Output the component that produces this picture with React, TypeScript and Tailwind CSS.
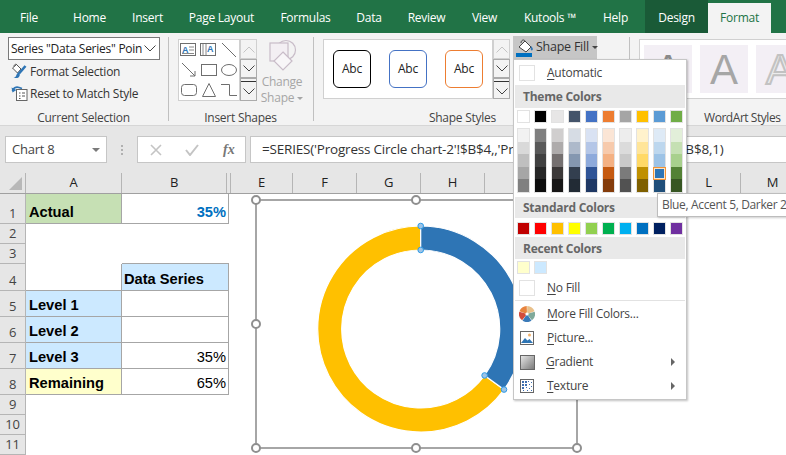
import React from "react";

const tabs: [string, string][] = [
  ["File", "w-[58px]"],
  ["Home", "w-[63px]"],
  ["Insert", "w-[53px]"],
  ["Page Layout", "w-[95px]"],
  ["Formulas", "w-[73px]"],
  ["Data", "w-[54px]"],
  ["Review", "w-[61px]"],
  ["View", "w-[55px]"],
  ["Kutools ™", "w-[76px]"],
  ["Help", "w-[57px] pr-[2px]"],
];

const themeTop = ["#ffffff", "#000000", "#e7e6e6", "#44546a", "#4472c4", "#ed7d31", "#a5a5a5", "#ffc000", "#5b9bd5", "#70ad47"];
const themeShades = [
  ["#f2f2f2", "#d9d9d9", "#bfbfbf", "#a6a6a6", "#808080"],
  ["#7f7f7f", "#595959", "#404040", "#262626", "#0d0d0d"],
  ["#d0cece", "#aeabab", "#757070", "#3b3838", "#171616"],
  ["#d6dce4", "#adb9ca", "#8497b0", "#333f4f", "#222b35"],
  ["#d9e2f3", "#b4c6e7", "#8eaadb", "#2f5496", "#1f3864"],
  ["#fbe5d5", "#f7caac", "#f4b183", "#c55a11", "#843c0b"],
  ["#ededed", "#dbdbdb", "#c9c9c9", "#7b7b7b", "#525252"],
  ["#fff2cc", "#ffe599", "#ffd966", "#bf9000", "#7f6000"],
  ["#deeaf6", "#bdd7ee", "#9dc3e6", "#2e75b5", "#1f4e79"],
  ["#e2efd9", "#c5e0b3", "#a8d08d", "#538135", "#375623"],
];
const standard = ["#c00000", "#ff0000", "#ffc000", "#ffff00", "#92d050", "#00b050", "#00b0f0", "#0070c0", "#002060", "#7030a0"];

function polar(cx: number, cy: number, r: number, deg: number): [number, number] {
  const a = (deg * Math.PI) / 180;
  return [cx + r * Math.sin(a), cy - r * Math.cos(a)];
}
function sector(cx: number, cy: number, ro: number, ri: number, a: number, b: number) {
  const [x1, y1] = polar(cx, cy, ro, a);
  const [x2, y2] = polar(cx, cy, ro, b);
  const [x3, y3] = polar(cx, cy, ri, b);
  const [x4, y4] = polar(cx, cy, ri, a);
  const large = b - a > 180 ? 1 : 0;
  return `M${x1} ${y1}A${ro} ${ro} 0 ${large} 1 ${x2} ${y2}L${x3} ${y3}A${ri} ${ri} 0 ${large} 0 ${x4} ${y4}Z`;
}

function Chevron({ up = false, color = "#444" }: { up?: boolean; color?: string }) {
  return (
    <svg width="12" height="7" viewBox="0 0 12 7" fill="none">
      <path d={up ? "M0.5 6.5L6 1l5.5 5.5" : "M0.5 0.5L6 6l5.5-5.5"} stroke={color} />
    </svg>
  );
}

function Scroller() {
  return (
    <div className="flex flex-col w-[17px]">
      <div className="h-[20px] border border-[#d0d0d0] bg-[#f3f3f3] flex items-center justify-center">
        <Chevron up color="#c4c4c4" />
      </div>
      <div className="h-[19px] border border-[#ababab] bg-[#f3f3f3] flex items-center justify-center">
        <Chevron />
      </div>
      <div className="flex-1 border border-[#ababab] bg-[#f3f3f3] flex flex-col items-center">
        <div className="w-full h-px bg-[#333] mt-[2px] mb-[6px]" />
        <Chevron />
      </div>
    </div>
  );
}

function ShapeIcon({ i }: { i: number }) {
  const s = "#6e6e6e";
  const shapes = [
    <g key="0">
      <rect x="1.5" y="2.5" width="15" height="12" fill="#fff" stroke={s} />
      <text x="3" y="11.5" fontSize="9" fontWeight="700" fill="#2e75b5" fontFamily="Liberation Sans">A</text>
      <path d="M10 6h5M10 9h5M3 12.5h12" stroke="#888" />
    </g>,
    <g key="1">
      <rect x="1.5" y="2.5" width="15" height="12" fill="#fff" stroke={s} />
      <path d="M4 3v11M7 3v11" stroke="#888" />
      <text x="8" y="11" fontSize="9" fontWeight="700" fill="#2e75b5" fontFamily="Liberation Sans">A</text>
    </g>,
    <path key="2" d="M3 2l14 14" stroke={s} fill="none" />,
    <path key="3" d="M3 2l13 13M16 10v5h-5" stroke={s} fill="none" />,
    <rect key="4" x="2.5" y="3.5" width="15" height="11" stroke={s} fill="none" />,
    <ellipse key="5" cx="10" cy="9" rx="7.5" ry="5.5" stroke={s} fill="none" />,
    <rect key="6" x="2.5" y="3.5" width="15" height="11" rx="3" stroke={s} fill="none" />,
    <path key="7" d="M10 2.5l6.5 13h-13z" stroke={s} fill="none" />,
    <path key="8" d="M2 3.5h8.5v11H18" stroke={s} fill="none" />,
  ];
  return (
    <svg width="20" height="18" viewBox="0 0 20 18">
      {shapes[i]}
    </svg>
  );
}

function AbcCard({ border }: { border: string }) {
  return (
    <div className={`w-[38px] h-[38px] rounded-[6px] border bg-white flex items-center justify-center pb-px text-[12px] text-[#222] ${border}`}>
      Abc
    </div>
  );
}

function Ribbon() {
  return (
    <div className="flex h-[93px] shrink-0 bg-[#f3f3f3] pt-[4px] border-b border-[#d6d6d6] text-[#444]">
      {/* Current Selection */}
      <div className="w-[169px] h-[84px] border-r border-[#c0c0c0] flex flex-col shrink-0">
        <div className="shrink-0 ml-[8px] w-[152px] h-[23px] border border-[#7a7a7a] bg-white flex items-center pl-[2px] pr-[3px] justify-between text-[12px] text-[#222] whitespace-nowrap overflow-hidden">
          <span className="overflow-hidden">Series "Data Series" Poin</span>
          <span className="shrink-0 pl-[2px]">
            <Chevron />
          </span>
        </div>
        <div className="shrink-0 ml-[11px] h-[22px] pt-px flex items-center gap-[2px] text-[12px] text-[#333]">
          <svg width="17" height="17" viewBox="0 0 17 17" fill="none">
            <path d="M1.5 5L5.5 1.5 10 6l-3.5 4z" fill="#fff" stroke="#555" />
            <path d="M3 3.5c0-2 2-3 3-1.5" stroke="#555" />
            <path d="M14.5 3L8 10.5" stroke="#2e75b5" strokeWidth="2.6" />
            <path d="M7.5 9.5c-1.5.5-2 2-2.5 3.5-.5 1-1.5 1.5-2.5 1.5 2 1 5 1 6-1.5.5-1 .5-2.5-1-3.5z" fill="#2e75b5" />
          </svg>
          <span>Format Selection</span>
        </div>
        <div className="shrink-0 ml-[11px] h-[22px] pt-px flex items-center gap-[2px] text-[12px] text-[#333]">
          <svg width="17" height="17" viewBox="0 0 17 17" fill="none">
            <rect x="5.5" y="4.5" width="10.5" height="11" fill="#fff" stroke="#666" />
            <path d="M8 8h1.5M11 8h3M8 11h1.5M11 11h3M8 13.5h1.5" stroke="#555" />
            <path d="M1.5 6C2 3 5 1.5 8 2.5l3 1" stroke="#2e75b5" strokeWidth="1.8" />
            <path d="M0.5 2.5l1 5 4-2.5z" fill="#2e75b5" />
          </svg>
          <span>Reset to Match Style</span>
        </div>
        <div className="shrink-0 mt-[5px] text-center text-[12px] text-[#444] pr-[1px]">Current Selection</div>
      </div>

      {/* Insert Shapes */}
      <div className="w-[145px] h-[84px] border-r border-[#c0c0c0] flex flex-col shrink-0">
        <div className="shrink-0 flex h-[62px] mt-[2px] ml-[9px]">
          <div className="w-[62px] bg-white border border-[#d0d0d0] grid grid-cols-3 place-items-center">
            {[0, 1, 2, 3, 4, 5, 6, 7, 8].map((i) => (
              <ShapeIcon key={i} i={i} />
            ))}
          </div>
          <Scroller />
          <div className="w-[42px] ml-[4px] flex flex-col items-center text-[12px] text-[#a6a6a6] leading-[16px]">
            <svg width="30" height="32" viewBox="0 0 30 32" fill="none" className="mt-[0px] shrink-0">
              <circle cx="19" cy="11" r="9.5" fill="#f3f3f3" stroke="#c8bcc8" strokeWidth="1.2" />
              <rect x="3" y="4" width="18" height="18" fill="#f3eff3" stroke="#c8bcc8" strokeWidth="1.2" />
              <path d="M16 13l9 9-9 9-9-9z" fill="#f8f6f8" stroke="#c8bcc8" strokeWidth="1.2" />
            </svg>
            <span className="mt-[3px] shrink-0">Change</span>
            <span className="flex items-center gap-[3px] shrink-0">
              Shape
              <span className="w-0 h-0 border-x-[3px] border-x-transparent border-t-[3px] border-t-[#a6a6a6]" />
            </span>
          </div>
        </div>
        <div className="shrink-0 mt-[8px] text-center text-[12px] pr-[1px]">Insert Shapes</div>
      </div>

      {/* Shape Styles */}
      <div className="w-[316px] h-[84px] border-r border-[#c0c0c0] flex flex-col shrink-0">
        <div className="shrink-0 flex h-[62px] ml-[9px]">
          <div className="flex h-[60px] mt-[2px]">
            <div className="w-[170px] bg-white border border-[#d0d0d0] flex items-center gap-[18px] pl-[9px]">
              <AbcCard border="border-black" />
              <AbcCard border="border-[#4472c4]" />
              <AbcCard border="border-[#ed7d31]" />
            </div>
            <Scroller />
          </div>
          <div className="ml-[3px] -mt-[1px] w-[84px] h-[23px] bg-[#c6c6c6] flex items-center pl-[3px] text-[12.5px] text-[#333] whitespace-nowrap">
            <svg width="19" height="19" viewBox="0 0 19 19" fill="none" className="shrink-0">
              <path d="M3 9l6-6 6 6-5 5z" fill="#fff" stroke="#444" />
              <path d="M5 5c0-3 3-4 4-2" stroke="#444" />
              <path d="M15 8c2 2 2.5 4 1 4.500-1.500 0-1.500-2.500-1-4.500z" fill="#2e75b5" />
              <rect x="0" y="15" width="16" height="4" fill="#0070c0" />
            </svg>
            <span className="ml-[1px]">Shape Fill</span>
            <span className="ml-[3px] w-0 h-0 border-x-[3px] border-x-transparent border-t-[3px] border-t-[#444]" />
          </div>
        </div>
        <div className="shrink-0 mt-[10px] text-center text-[12px] pr-[18px]">Shape Styles</div>
      </div>

      {/* WordArt Styles */}
      <div className="flex-1 h-[84px] flex flex-col min-w-0">
        <div className="shrink-0 ml-[9px] mt-[2px] h-[60px] bg-white border border-[#d0d0d0] border-r-0 flex items-center gap-[8px] pl-[4px] overflow-hidden font-['Liberation_Sans',sans-serif]">
          <div className="shrink-0 w-[48px] h-[48px] bg-[#f3eff5] flex items-center justify-center text-[42px] text-[#8a8a8a]">A</div>
          <div className="shrink-0 w-[48px] h-[48px] bg-[#f3eff5] flex items-center justify-center text-[42px] text-[#a6a6a6]">A</div>
          <div className="shrink-0 w-[48px] h-[48px] bg-[#f3eff5] flex items-center justify-center text-[42px] text-[#ececec] [-webkit-text-stroke:2px_#c2c2c2]">A</div>
        </div>
        <div className="shrink-0 mt-[10px] pl-[74px] text-[12px] tracking-[-0.45px] whitespace-nowrap">WordArt Styles</div>
      </div>
    </div>
  );
}

function FormulaBar() {
  return (
    <div className="h-[47px] bg-[#e6e6e6] flex pt-[10px] pl-[5px] shrink-0">
      <div className="w-[102px] h-[27px] bg-white border border-[#c6c6c6] flex items-center justify-between pl-[6px] pr-[6px] text-[13px] text-[#444]">
        Chart 8
        <span className="w-0 h-0 border-x-[4px] border-x-transparent border-t-[4px] border-t-[#7a7a7a]" />
      </div>
      <div className="w-[30px] flex flex-col items-center justify-center gap-[2px] h-[27px]">
        <span className="w-[2px] h-[2px] bg-[#b0b0b0]" />
        <span className="w-[2px] h-[2px] bg-[#b0b0b0]" />
        <span className="w-[2px] h-[2px] bg-[#b0b0b0]" />
      </div>
      <div className="w-[109px] h-[27px] bg-white border border-[#c6c6c6] flex items-center">
        <svg width="12" height="12" viewBox="0 0 12 12" fill="none" className="ml-[12px]">
          <path d="M1 1l10 10M11 1L1 11" stroke="#c4c4c4" strokeWidth="1.6" />
        </svg>
        <svg width="14" height="12" viewBox="0 0 14 12" fill="none" className="ml-[23px]">
          <path d="M1 6l4 5 8-10" stroke="#c4c4c4" strokeWidth="2" />
        </svg>
        <span className="ml-[24px] font-['Liberation_Serif',serif] italic font-bold text-[14px] tracking-[0] text-[#777]">fx</span>
      </div>
      <div className="ml-[4px] flex-1 h-[27px] bg-white border border-[#c6c6c6] border-r-0 flex items-center pl-[11px] text-[13.5px] tracking-[-0.2px] text-[#333] whitespace-nowrap overflow-hidden">
        =SERIES('Progress Circle chart-2'!$B$4,,'Progress Circle chart-2'!$B$5:$B$8,1)
      </div>
    </div>
  );
}

const columns: [string, string][] = [
  ["A", "w-[96px]"],
  ["B", "w-[105px]"],
  ["", "w-[4px]"],
  ["E", "w-[62px]"],
  ["F", "w-[64px]"],
  ["G", "w-[64px]"],
  ["H", "w-[64px]"],
  ["I", "w-[64px]"],
  ["J", "w-[64px]"],
  ["K", "w-[64px]"],
  ["L", "w-[64px]"],
  ["M", "w-[64px]"],
];

type Row = { n: number; h: string; a?: string; b?: string; ac?: string; bc?: string; boxed?: boolean };
const rows: Row[] = [
  { n: 1, h: "h-[30px]", a: "Actual", b: "35%", ac: "bg-[#c6e0b4]", bc: "font-bold text-[#0070c0] justify-end", boxed: true },
  { n: 2, h: "h-[20px]" },
  { n: 3, h: "h-[20px]" },
  { n: 4, h: "h-[27px]", b: "Data Series", bc: "font-bold text-black bg-[#cce9ff]", boxed: true },
  { n: 5, h: "h-[26px]", a: "Level 1", ac: "bg-[#cce9ff]", bc: "text-black", boxed: true },
  { n: 6, h: "h-[26px]", a: "Level 2", ac: "bg-[#cce9ff]", bc: "text-black", boxed: true },
  { n: 7, h: "h-[26px]", a: "Level 3", b: "35%", ac: "bg-[#cce9ff]", bc: "text-black justify-end", boxed: true },
  { n: 8, h: "h-[26px]", a: "Remaining", b: "65%", ac: "bg-[#ffffcc]", bc: "text-black justify-end", boxed: true },
  { n: 9, h: "h-[20px]" },
  { n: 10, h: "h-[20px]" },
  { n: 11, h: "h-[20px]" },
];

function Sheet() {
  return (
    <div className="flex-1 bg-white overflow-hidden">
      <div className="flex h-[20px] bg-[#e6e6e6] border-b border-[#a0a0a0] box-content">
        <div className="w-[26px] shrink-0 border-r border-[#b5b5b5] flex items-end justify-end pr-[3px] pb-[3px]">
          <div className="w-[13px] h-[13px] bg-[#b8b8b8] [clip-path:polygon(100%_0,100%_100%,0_100%)]" />
        </div>
        {columns.map(([c, w], i) => (
          <div key={i} className={`${w} shrink-0 border-r border-[#b5b5b5] flex items-center justify-center text-[13px] text-[#222]`}>
            {c}
          </div>
        ))}
      </div>
      {rows.map((r) => (
        <div key={r.n} className={`flex ${r.h}`}>
          <div className="w-[26px] shrink-0 bg-[#e6e6e6] border-r border-b border-[#b5b5b5] flex items-end justify-center pb-[1px] text-[13px] leading-[18px] text-[#444]">
            {r.n}
          </div>
          {r.boxed ? (
            <>
              <div
                className={`w-[96px] shrink-0 flex items-end pl-[3px] pb-[2px] font-['Liberation_Sans',sans-serif] font-bold tracking-[0] text-[14.67px] leading-[18px] text-black border-r border-b border-[#a6a6a6] ${r.ac ?? ""}`}
              >
                {r.a}
              </div>
              <div
                className={`w-[107px] shrink-0 flex items-end px-[2px] pb-[2px] font-['Liberation_Sans',sans-serif] tracking-[0] text-[14.67px] leading-[18px] border-r border-b border-[#a6a6a6] ${r.bc ?? ""} ${r.n === 4 ? "border-t -mt-px h-[28px]" : ""}`}
              >
                {r.b}
              </div>
            </>
          ) : null}
        </div>
      ))}
      <div className="flex h-[20px]">
        <div className="w-[26px] shrink-0 bg-[#e6e6e6] border-r border-[#b5b5b5]" />
      </div>
    </div>
  );
}

function Handle({ pos }: { pos: string }) {
  return <div className={`absolute w-[10px] h-[10px] rounded-full bg-white border-2 border-[#8f8f8f] ${pos}`} />;
}

function Chart() {
  const cx = 165.7;
  const cy = 130;
  const angle = 126;
  const dots: [number, number][] = [polar(cx, cy, 103, 0), polar(cx, cy, 79, 0), polar(cx, cy, 103, angle), polar(cx, cy, 79, angle)];
  return (
    <div className="absolute left-[255px] top-[199px] w-[323px] h-[250px]">
      <div className="absolute inset-0 border-2 border-[#a6a6a6] bg-white" />
      <svg width="323" height="250" viewBox="0 0 323 250" className="absolute inset-0">
        <path d={sector(cx, cy, 103, 79, angle, 360)} fill="#ffc000" stroke="#fff" strokeWidth="1.2" />
        <path d={sector(cx, cy, 103, 79, 0, angle)} fill="#2e75b5" stroke="#fff" strokeWidth="1.2" />
        {dots.map(([x, y], i) => (
          <circle key={i} cx={x} cy={y} r="2.8" fill="#9dc3e6" stroke="#2e9be6" strokeWidth="1" />
        ))}
      </svg>
      <Handle pos="left-[-4px] top-[-4px]" />
      <Handle pos="left-[156px] top-[-4px]" />
      <Handle pos="left-[317px] top-[-4px]" />
      <Handle pos="left-[-4px] top-[120px]" />
      <Handle pos="left-[317px] top-[120px]" />
      <Handle pos="left-[-4px] top-[244px]" />
      <Handle pos="left-[156px] top-[244px]" />
      <Handle pos="left-[317px] top-[244px]" />
    </div>
  );
}

function Swatch({ color }: { color: string }) {
  return <div className="w-[13px] h-[13px] border border-[#e2e2e2] box-border" style={{ backgroundColor: color }} />;
}

function MenuHeader({ children, cls }: { children: React.ReactNode; cls: string }) {
  return <div className={`mx-px bg-[#e9e9e9] flex items-center pl-[8px] pt-px font-bold text-[12px] text-[#666] ${cls}`}>{children}</div>;
}

function Label({ ch, rest }: { ch: string; rest: string }) {
  return (
    <span className="text-[12px] text-[#444] ml-[12px]">
      <span className="underline underline-offset-2">{ch}</span>
      {rest}
    </span>
  );
}

function EmptyBox() {
  return <div className="w-[16px] h-[16px] border border-[#e2e2e2] bg-white shrink-0" />;
}

function Arrow() {
  return <span className="absolute right-[11px] w-0 h-0 border-y-[4px] border-y-transparent border-l-[4px] border-l-[#666]" />;
}

function Menu() {
  const pie = [
    [-72, 0, "#e8843e"],
    [0, 72, "#e9c08a"],
    [72, 144, "#7fa99a"],
    [144, 216, "#3a7ab8"],
    [216, 288, "#d24b3b"],
  ] as const;
  return (
    <div className="absolute left-[513px] top-[59px] w-[174px] h-[341px] bg-white border border-[#c6c6c6] shadow-[1px_1px_2px_rgba(0,0,0,0.25)]">
      <div className="h-[25px] flex items-center pl-[5px] pt-px">
        <EmptyBox />
        <Label ch="A" rest="utomatic" />
      </div>
      <MenuHeader cls="h-[23px]">Theme Colors</MenuHeader>
      <div className="flex gap-[4px] pl-[3px] mt-[2px]">
        {themeTop.map((c) => (
          <Swatch key={c} color={c} />
        ))}
      </div>
      <div className="flex gap-[4px] pl-[3px] mt-[5px]">
        {themeShades.map((col, i) => (
          <div key={i} className="w-[13px] h-[65px] border border-[#e2e2e2] flex flex-col relative">
            {col.map((c) => (
              <div key={c} className="flex-1" style={{ backgroundColor: c }} />
            ))}
            {i === 8 ? (
              <div className="absolute left-[-1px] top-[38px] w-[13px] h-[13px] border border-[#f29436] bg-[#fbe3c5] p-px">
                <div className="w-full h-full bg-[#2e75b5]" />
              </div>
            ) : null}
          </div>
        ))}
      </div>
      <MenuHeader cls="h-[21px] mt-[4px]">Standard Colors</MenuHeader>
      <div className="flex gap-[4px] pl-[3px] mt-[4px]">
        {standard.map((c) => (
          <Swatch key={c} color={c} />
        ))}
      </div>
      <MenuHeader cls="h-[22px] mt-[2px]">Recent Colors</MenuHeader>
      <div className="flex gap-[4px] pl-[3px] mt-[2px]">
        <Swatch color="#ffffcc" />
        <Swatch color="#cce9ff" />
      </div>
      <div className="h-[24px] mt-[2px] flex items-center pl-[5px]">
        <EmptyBox />
        <Label ch="N" rest="o Fill" />
      </div>
      <div className="h-px bg-[#e2e2e2] mx-px" />
      <div className="h-[24px] mt-[1px] flex items-center pl-[5px]">
        <svg width="16" height="16" viewBox="0 0 16 16" className="shrink-0">
          {pie.map(([a, b, c]) => (
            <path key={c} d={sector(8, 8, 8, 1.6, a + 2, b - 2)} fill={c} />
          ))}
        </svg>
        <Label ch="M" rest="ore Fill Colors..." />
      </div>
      <div className="h-[24px] flex items-center pl-[5px]">
        <svg width="16" height="16" viewBox="0 0 16 16" className="shrink-0">
          <rect x="1.500" y="1.500" width="13" height="13" fill="#fff" stroke="#666" />
          <path d="M2 13l4-5 2.500 2.500L10.500 9 14 13z" fill="#2e75b5" />
          <circle cx="10.500" cy="5" r="1.500" fill="#f2b26b" />
        </svg>
        <Label ch="P" rest="icture..." />
      </div>
      <div className="h-[24px] flex items-center pl-[5px]">
        <div className="w-[15px] h-[15px] ml-[1px] -mr-[1px] border border-[#666] bg-gradient-to-br from-[#e6e6e6] to-[#7b7b7b] shrink-0" />
        <Label ch="G" rest="radient" />
        <Arrow />
      </div>
      <div className="h-[24px] flex items-center pl-[5px]">
        <svg width="16" height="16" viewBox="0 0 16 16" className="shrink-0">
          <rect x="1.500" y="1.500" width="13" height="13" fill="#fff" stroke="#666" />
          <path d="M3 3h2v2H3zM6 3h2v2H6zM9 3h1v1H9zM12 4h1v1h-1zM3 6h2v2H3zM6 6h2v2H6zM10 6h1v1h-1zM3 9h2v2H3zM7 9h1v1H7zM10 10h1v1h-1zM12 8h1v1h-1zM4 12h1v1H4zM8 12h1v1H8zM12 12h1v1h-1z" fill="#3f6fb0" />
        </svg>
        <Label ch="T" rest="exture" />
        <Arrow />
      </div>
    </div>
  );
}

export default function App() {
  return (
    <div className="relative w-[786px] h-[455px] overflow-hidden flex flex-col bg-white font-['Open_Sans',sans-serif] tracking-[-0.25px]">
      <div className="h-[33px] bg-[#217346] flex shrink-0 text-white text-[12px] whitespace-nowrap">
        {tabs.map(([t, w]) => (
          <div key={t} className={`${w} flex items-center justify-center pt-[3px] shrink-0`}>
            {t}
          </div>
        ))}
        <div className="w-[63px] bg-[#1a5a37] flex items-center justify-center pt-[3px] shrink-0">Design</div>
        <div className="w-[63px] mt-[3px] bg-[#f3f3f3] text-[#217346] flex items-center justify-center shrink-0">Format</div>
      </div>
      <Ribbon />
      <FormulaBar />
      <Sheet />
      <Chart />
      <Menu />
      <div className="absolute left-[657px] top-[193px] w-[140px] h-[24px] bg-white border border-[#bdbdbd] shadow-[1px_1px_2px_rgba(0,0,0,0.2)] flex items-center pl-[4px] text-[12px] tracking-[-0.35px] text-[#555] whitespace-nowrap">
        Blue, Accent 5, Darker 25%
      </div>
    </div>
  );
}
